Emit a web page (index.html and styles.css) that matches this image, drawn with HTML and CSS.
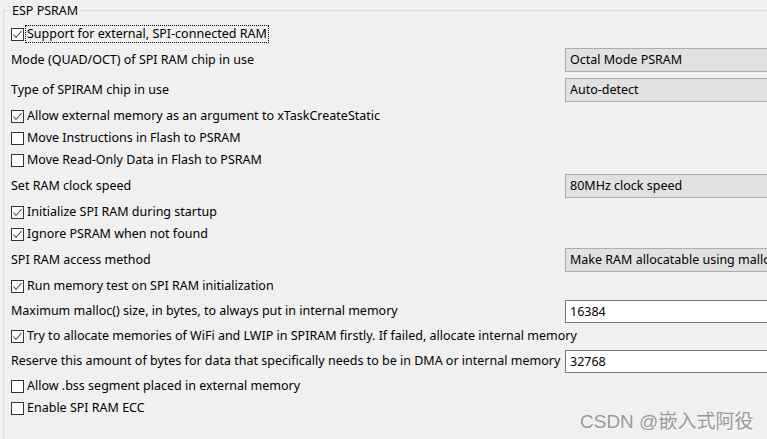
FILE: index.html
```html
<!DOCTYPE html>
<html>
<head>
<meta charset="utf-8">
<link rel="stylesheet" href="styles.css">
</head>
<body>
<fieldset class="group">
  <legend class="group-title">ESP PSRAM</legend>

  <div class="row row-check">
    <span class="box checked"><svg viewBox="0 0 11 11"><polyline points="1.5,5.5 4,8.5 9.5,2"/></svg></span>
    <span class="label focused">Support for external, SPI-connected RAM</span>
  </div>

  <div class="row row-combo">
    <span class="label">Mode (QUAD/OCT) of SPI RAM chip in use</span>
    <div class="combo">Octal Mode PSRAM</div>
  </div>

  <div class="row row-combo">
    <span class="label">Type of SPIRAM chip in use</span>
    <div class="combo">Auto-detect</div>
  </div>

  <div class="row row-check">
    <span class="box checked"><svg viewBox="0 0 11 11"><polyline points="1.5,5.5 4,8.5 9.5,2"/></svg></span>
    <span class="label">Allow external memory as an argument to xTaskCreateStatic</span>
  </div>

  <div class="row row-check">
    <span class="box"></span>
    <span class="label">Move Instructions in Flash to PSRAM</span>
  </div>

  <div class="row row-check">
    <span class="box"></span>
    <span class="label">Move Read-Only Data in Flash to PSRAM</span>
  </div>

  <div class="row row-combo">
    <span class="label">Set RAM clock speed</span>
    <div class="combo">80MHz clock speed</div>
  </div>

  <div class="row row-check">
    <span class="box checked"><svg viewBox="0 0 11 11"><polyline points="1.5,5.5 4,8.5 9.5,2"/></svg></span>
    <span class="label">Initialize SPI RAM during startup</span>
  </div>

  <div class="row row-check">
    <span class="box checked"><svg viewBox="0 0 11 11"><polyline points="1.5,5.5 4,8.5 9.5,2"/></svg></span>
    <span class="label">Ignore PSRAM when not found</span>
  </div>

  <div class="row row-combo">
    <span class="label">SPI RAM access method</span>
    <div class="combo">Make RAM allocatable using mallo</div>
  </div>

  <div class="row row-check">
    <span class="box checked"><svg viewBox="0 0 11 11"><polyline points="1.5,5.5 4,8.5 9.5,2"/></svg></span>
    <span class="label">Run memory test on SPI RAM initialization</span>
  </div>

  <div class="row row-text">
    <span class="label">Maximum malloc() size, in bytes, to always put in internal memory</span>
    <div class="textbox">16384</div>
  </div>

  <div class="row row-check">
    <span class="box checked"><svg viewBox="0 0 11 11"><polyline points="1.5,5.5 4,8.5 9.5,2"/></svg></span>
    <span class="label">Try to allocate memories of WiFi and LWIP in SPIRAM firstly. If failed, allocate internal memory</span>
  </div>

  <div class="row row-text">
    <span class="label">Reserve this amount of bytes for data that specifically needs to be in DMA or internal memory</span>
    <div class="textbox">32768</div>
  </div>

  <div class="row row-check">
    <span class="box"></span>
    <span class="label">Allow .bss segment placed in external memory</span>
  </div>

  <div class="row row-check">
    <span class="box"></span>
    <span class="label">Enable SPI RAM ECC</span>
  </div>
</fieldset>

<div class="watermark">CSDN @嵌入式阿役</div>
</body>
</html>
```

FILE: styles.css
```css
html, body {
  margin: 0;
  padding: 0;
  background: #f0f0f0;
  overflow: hidden;
  width: 767px;
  height: 439px;
}

body {
  font-family: "Noto Sans", "Open Sans", "Liberation Sans", sans-serif;
  font-size: 12.5px;
  color: #000;
  position: relative;
  padding: 3px 0 0 3px;
  box-sizing: border-box;
}

.group {
  margin: 0;
  padding: 5px 0 0 7px;
  border: 1px solid #dcdcdc;
  border-right: none;
  border-bottom: none;
  height: 436px;
  width: 764px;
  box-sizing: border-box;
}

.group-title {
  padding: 0 1px;
  line-height: 15px;
}

.row {
  display: grid;
  grid-template-columns: 554px 1fr;
  align-items: center;
}

.row-check {
  height: 22px;
  display: flex;
  align-items: center;
}

.row-combo {
  height: 30px;
}

.row-text {
  height: 28px;
}

.label {
  white-space: nowrap;
  line-height: 16px;
}

.row-check .label {
  margin-left: 3px;
}

.focused {
  outline: 1px dotted #000;
  outline-offset: 0;
  padding: 0 1px;
  margin-left: 2px !important;
}

.box {
  width: 13px;
  height: 13px;
  box-sizing: border-box;
  border: 1px solid #333;
  background: #fff;
  flex: none;
  display: flex;
}

.box svg {
  width: 11px;
  height: 11px;
}

.box polyline {
  fill: none;
  stroke: #444;
  stroke-width: 1.1;
}

.combo {
  height: 24px;
  box-sizing: border-box;
  border: 1px solid #adadad;
  border-right: none;
  background: #e1e1e1;
  padding: 0 4px;
  line-height: 22px;
  white-space: nowrap;
  overflow: hidden;
}

.textbox {
  height: 23px;
  box-sizing: border-box;
  border: 1px solid #7a7a7a;
  border-right: none;
  background: #fff;
  padding: 0 4px;
  line-height: 21px;
}

.watermark {
  position: absolute;
  left: 580px;
  top: 406px;
  font-family: "Liberation Sans", "Noto Sans CJK SC", sans-serif;
  font-size: 19px;
  color: #8a8a8a;
  text-shadow: 1px 1px 1px rgba(255,255,255,0.8);
  white-space: nowrap;
  opacity: 0.85;
}
```
